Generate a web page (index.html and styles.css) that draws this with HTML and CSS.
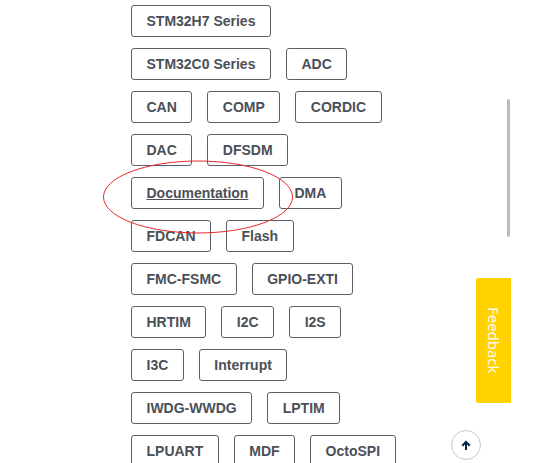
FILE: index.html
```html
<!DOCTYPE html>
<html lang="en">
<head>
    <meta charset="UTF-8">
    <meta name="viewport" content="width=device-width, initial-scale=1.0">
    <title>Tags</title>
    <link rel="stylesheet" href="styles.css">
</head>
<body>
    <div class="tag-list">
        <a class="tag" href="#">STM32H7 Series</a>
        <a class="tag" href="#">STM32C0 Series</a>
        <a class="tag" href="#">ADC</a>
        <a class="tag" href="#">CAN</a>
        <a class="tag" href="#">COMP</a>
        <a class="tag" href="#">CORDIC</a>
        <a class="tag" href="#">DAC</a>
        <a class="tag" href="#">DFSDM</a>
        <a class="tag tag-hover" href="#">Documentation</a>
        <a class="tag" href="#">DMA</a>
        <a class="tag" href="#">FDCAN</a>
        <a class="tag" href="#">Flash</a>
        <a class="tag" href="#">FMC-FSMC</a>
        <a class="tag" href="#">GPIO-EXTI</a>
        <a class="tag" href="#">HRTIM</a>
        <a class="tag" href="#">I2C</a>
        <a class="tag" href="#">I2S</a>
        <a class="tag" href="#">I3C</a>
        <a class="tag" href="#">Interrupt</a>
        <a class="tag" href="#">IWDG-WWDG</a>
        <a class="tag" href="#">LPTIM</a>
        <a class="tag" href="#">LPUART</a>
        <a class="tag" href="#">MDF</a>
        <a class="tag" href="#">OctoSPI</a>
    </div>

    <!-- red annotation round the hovered tag -->
    <svg class="highlight" width="194" height="76" viewBox="0 0 194 76">
        <ellipse cx="97" cy="38" rx="94.5" ry="36" fill="none" stroke="#e8282b" stroke-width="1"/>
    </svg>

    <div class="scroll-thumb"></div>

    <a class="feedback" href="#">Feedback</a>

    <a class="back-top" href="#">
        <svg width="12" height="12" viewBox="0 0 12 12">
            <path d="M6 1.5 L10.5 6 L9 7.4 L7 5.4 L7 11 L5 11 L5 5.4 L3 7.4 L1.5 6 Z" fill="#03234b"/>
        </svg>
    </a>
</body>
</html>
```

FILE: styles.css
```css
* {
    margin: 0;
    padding: 0;
    box-sizing: border-box;
}

body {
    font-family: 'Liberation Sans', Arial, sans-serif;
    background: #fff;
    overflow: hidden;
    height: 463px;
}

.tag-list {
    display: flex;
    flex-wrap: wrap;
    gap: 11px 15px;
    width: 274px;
    margin-left: 131px;
    padding-top: 5px;
}

.tag {
    display: block;
    height: 32px;
    line-height: 30px;
    padding: 0 14.5px;
    border: 1px solid #5b6068;
    border-radius: 3px;
    font-size: 14px;
    font-weight: bold;
    color: #4b5058;
    text-decoration: none;
    white-space: nowrap;
}

.tag-hover {
    text-decoration: underline;
}

.highlight {
    position: absolute;
    left: 101px;
    top: 159px;
}

.scroll-thumb {
    position: absolute;
    left: 507px;
    top: 99px;
    width: 3px;
    height: 138px;
    border-radius: 2px;
    background: #bcbcbc;
}

.feedback {
    position: absolute;
    left: 476px;
    top: 278px;
    width: 35px;
    height: 125px;
    background: #ffd200;
    border-radius: 2px 0 0 2px;
    color: #fff;
    font-family: 'Open Sans', 'Liberation Sans', sans-serif;
    font-size: 15px;
    writing-mode: vertical-rl;
    display: flex;
    align-items: center;
    justify-content: center;
    text-decoration: none;
}

.back-top {
    position: absolute;
    left: 451px;
    top: 430px;
    width: 30px;
    height: 30px;
    border: 1px solid #c3c8d0;
    border-radius: 50%;
    background: #fff;
    display: flex;
    align-items: center;
    justify-content: center;
}
```
